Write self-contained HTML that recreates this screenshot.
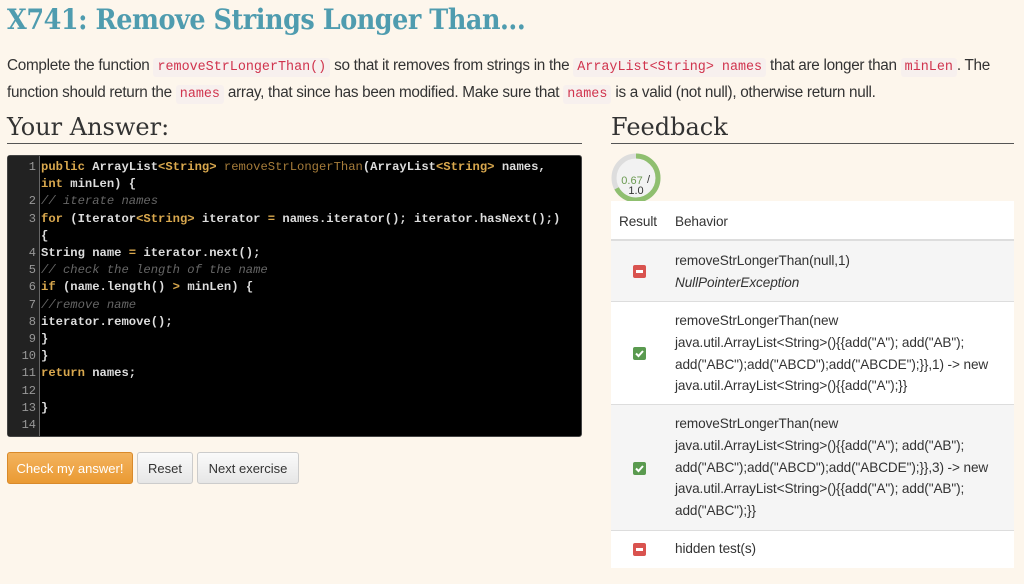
<!DOCTYPE html>
<html><head><meta charset="utf-8"><style>
body{margin:0;width:1024px;height:584px;background:#fdf6ec;font-family:"Liberation Sans",sans-serif;color:#333;position:relative;overflow:hidden}
.abs{position:absolute}
h1{position:absolute;left:7px;top:3px;margin:0;font:bold 28px "DejaVu Serif",serif;color:#4f9caf;letter-spacing:-0.5px;transform:scaleX(0.91);transform-origin:0 0;white-space:nowrap}
.p{position:absolute;left:7px;width:1015px;font-size:15.3px;line-height:25px;top:53px;color:#333;white-space:nowrap;letter-spacing:-0.3px}
code{font-family:"Liberation Mono",monospace;font-size:13.4px;color:#d0334d;background:#f7f0ee;padding:2px 4px;border-radius:3px;letter-spacing:0}
h2{position:absolute;margin:0;font:24px "DejaVu Serif",serif;color:#333;top:113px}
.rule{position:absolute;height:1px;background:#555;top:143px}
.code{position:absolute;left:7px;top:155px;width:575px;height:282px;background:#000;border-radius:3px;border:1px solid #444;box-sizing:border-box}
.gut{position:absolute;left:0;top:0;width:31px;height:100%;background:#222;border-right:1px solid #666}
.ln{position:absolute;font:12.2px "Liberation Mono",monospace;color:#eee;white-space:pre;line-height:17.2px}
.nums{left:0;width:28px;text-align:right;color:#999;top:3px;font-size:12px}
.src{left:33px;top:3px;font-weight:bold;color:#ddd}
.k{color:#d9a84e}.c{color:#666;font-style:italic;font-weight:normal}.f{color:#a67c3a;font-weight:normal}
.btn{position:absolute;top:452px;height:32px;border-radius:3px;font-size:13px;line-height:32px;text-align:center;box-sizing:border-box}
.tbl{position:absolute;left:611px;width:403px;top:201px;font-size:13.6px}
.row{position:absolute;left:0;width:403px;border-bottom:1px solid #ddd;box-sizing:border-box}
.t{position:absolute;left:64px;line-height:21.8px;letter-spacing:-0.1px}
.ic{position:absolute;left:22px;width:13px;height:13px;border-radius:2px}
.bad{background:#d9534f}.bad:after{content:"";position:absolute;left:3px;top:5px;width:7px;height:3px;background:#fff}
.ok{background:#5a9a4f}
</style></head><body>
<h1>X741: Remove Strings Longer Than...</h1>
<div class="p">Complete the function <code>removeStrLongerThan()</code> so that it removes from strings in the <code>ArrayList&lt;String&gt; names</code> that are longer than <code>minLen</code>. The<br>function should return the <code>names</code> array, that since has been modified. Make sure that <code>names</code> is a valid (not null), otherwise return null.</div>
<h2 style="left:7px">Your Answer:</h2>
<div class="rule" style="left:7px;width:575px"></div>
<h2 style="left:611px">Feedback</h2>
<div class="rule" style="left:611px;width:403px"></div>
<div class="code"><div class="gut"></div>
<div class="ln nums">1

2
3

4
5
6
7
8
9
10
11
12
13
14</div>
<div class="ln src"><span class="k">public</span> ArrayList<span class="k">&lt;String&gt;</span> <span class="f">removeStrLongerThan</span>(ArrayList<span class="k">&lt;String&gt;</span> names,
<span class="k">int</span> minLen) {
<span class="c">// iterate names</span>
<span class="k">for</span> (Iterator<span class="k">&lt;String&gt;</span> iterator <span class="k">=</span> names.iterator(); iterator.hasNext();)
{
String name <span class="k">=</span> iterator.next();
<span class="c">// check the length of the name</span>
<span class="k">if</span> (name.length() <span class="k">&gt;</span> minLen) {
<span class="c">//remove name</span>
iterator.remove();
}
}
<span class="k">return</span> names;

}
</div></div>
<div class="btn" style="left:7px;width:126px;background:linear-gradient(#f3b35e,#ea9a33);border:1px solid #d98a2a;color:#fff">Check my answer!</div>
<div class="btn" style="left:137px;width:56px;background:linear-gradient(#fafafa,#e6e6e6);border:1px solid #ccc;color:#333">Reset</div>
<div class="btn" style="left:197px;width:102px;background:linear-gradient(#fafafa,#e6e6e6);border:1px solid #ccc;color:#333">Next exercise</div>
<svg class="abs" style="left:611px;top:153px" width="50" height="50"><circle cx="25" cy="25" r="22" fill="#f2f2f2" stroke="#ddd" stroke-width="5"/><circle cx="25" cy="25" r="22" fill="none" stroke="#8fbf6f" stroke-width="5" stroke-dasharray="92.7 138.2" transform="rotate(-90 25 25)"/><text x="21" y="31" font-family="Liberation Sans" font-size="11" fill="#6a9a50" text-anchor="middle">0.67</text><text x="36" y="30" font-family="Liberation Sans" font-size="11" fill="#333">/</text><text x="25" y="41" font-family="Liberation Sans" font-size="11" fill="#333" text-anchor="middle">1.0</text></svg>
<div class="tbl">
<div class="row" style="top:0;height:40px;background:#fff;border-bottom:2px solid #ddd"><span class="t" style="left:8px;top:10px">Result</span><span class="t" style="top:10px">Behavior</span></div>
<div class="row" style="top:40px;height:61px;background:#f5f5f5"><div class="ic bad" style="top:24px"></div><div class="t" style="top:9px">removeStrLongerThan(null,1)<br><i>NullPointerException</i></div></div>
<div class="row" style="top:101px;height:103px;background:#fff"><div class="ic ok" style="top:45px"><svg width="13" height="13" style="position:absolute"><path d="M3 6.5l2.5 2.5 4.5-5" stroke="#fff" stroke-width="2" fill="none"/></svg></div><div class="t" style="top:8px">removeStrLongerThan(new<br>java.util.ArrayList&lt;String&gt;(){{add("A"); add("AB");<br>add("ABC");add("ABCD");add("ABCDE");}},1) -&gt; new<br>java.util.ArrayList&lt;String&gt;(){{add("A");}}</div></div>
<div class="row" style="top:204px;height:126px;background:#f5f5f5"><div class="ic ok" style="top:57px"><svg width="13" height="13" style="position:absolute"><path d="M3 6.5l2.5 2.5 4.5-5" stroke="#fff" stroke-width="2" fill="none"/></svg></div><div class="t" style="top:8px">removeStrLongerThan(new<br>java.util.ArrayList&lt;String&gt;(){{add("A"); add("AB");<br>add("ABC");add("ABCD");add("ABCDE");}},3) -&gt; new<br>java.util.ArrayList&lt;String&gt;(){{add("A"); add("AB");<br>add("ABC");}}</div></div>
<div class="row" style="top:330px;height:37px;background:#fff;border:none"><div class="ic bad" style="top:12px"></div><div class="t" style="top:7px">hidden test(s)</div></div>
</div>
</body></html>
